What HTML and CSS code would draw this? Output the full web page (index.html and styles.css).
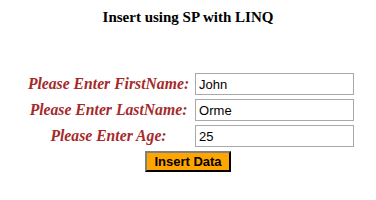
FILE: index.html
```html
<!DOCTYPE html>
<html lang="en">
<head>
    <meta charset="UTF-8">
    <title>Insert using SP with LINQ</title>
    <link rel="stylesheet" href="styles.css">
</head>
<body>
    <form class="insert-form">
        <h3 class="title">Insert using SP with LINQ</h3>
        <table class="form-table">
            <tr>
                <td class="label">Please Enter FirstName:</td>
                <td><input type="text" class="field" value="John"></td>
            </tr>
            <tr>
                <td class="label">Please Enter LastName:</td>
                <td><input type="text" class="field" value="Orme"></td>
            </tr>
            <tr>
                <td class="label">Please Enter Age:</td>
                <td><input type="text" class="field" value="25"></td>
            </tr>
            <tr>
                <td colspan="2" class="actions">
                    <button type="button" class="btn-insert">Insert Data</button>
                </td>
            </tr>
        </table>
    </form>
</body>
</html>
```

FILE: styles.css
```css
body {
    margin: 8px;
    background: #fff;
    font-family: "Liberation Serif", "Times New Roman", serif;
    color: #000;
}
.title {
    font-size: 15px;
    font-weight: bold;
    text-align: center;
    margin: 0 0 44px 0;
    line-height: 18px;
}
.form-table {
    margin: 0 auto;
    border-collapse: separate;
    border-spacing: 2px;
}
.form-table td {
    padding: 1px 2px;
}
.form-table td.label {
    padding-left: 8px;
}
.label {
    text-align: center;
    font-size: 15.7px;
    font-weight: bold;
    font-style: italic;
    color: #A52A2A;
    white-space: nowrap;
}
.field {
    width: 151px;
    height: 18px;
    padding: 1px 3px;
    margin: 0;
    border: 1px solid #a9a9a9;
    font-family: "Liberation Sans", Arial, sans-serif;
    font-size: 13px;
    color: #000;
}
.actions {
    text-align: center;
    padding-top: 2px;
}
.btn-insert {
    background: #FFA500;
    border: 2px solid;
    border-color: #808080 #000 #000 #808080;
    font-family: "Liberation Sans", Arial, sans-serif;
    font-size: 13px;
    font-weight: bold;
    padding: 1px 7px;
    margin: 0;
    color: #000;
}
```
